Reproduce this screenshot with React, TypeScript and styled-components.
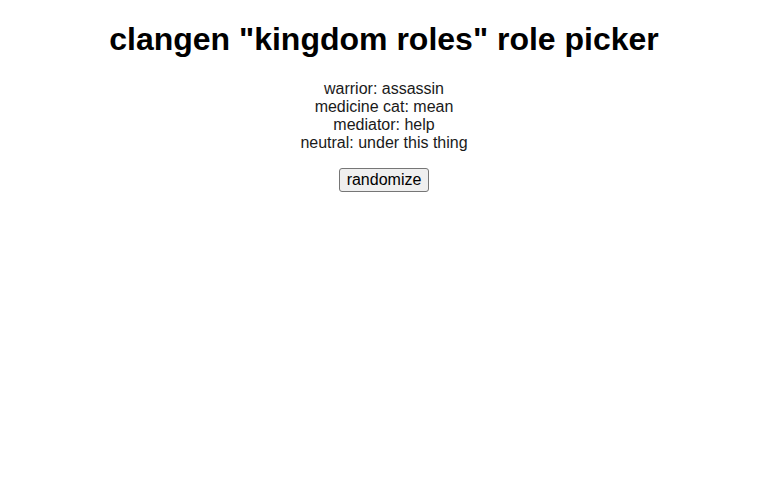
import { useState } from "react";
import styled, { createGlobalStyle } from "styled-components";

const ROLES = {
  warrior: ["assassin", "guard", "hunter", "scout"],
  "medicine cat": ["mean", "kind", "herbalist"],
  mediator: ["help", "peacekeeper", "diplomat"],
  neutral: ["under this thing", "wanderer", "loner"],
};

const pick = (list: string[]) => list[Math.floor(Math.random() * list.length)];

export default function App() {
  const [picked, setPicked] = useState<Record<string, string>>({
    warrior: "assassin",
    "medicine cat": "mean",
    mediator: "help",
    neutral: "under this thing",
  });

  const randomize = () => {
    const next: Record<string, string> = {};
    Object.entries(ROLES).forEach(([role, options]) => {
      next[role] = pick(options);
    });
    setPicked(next);
  };

  return (
    <>
      <GlobalStyle />
      <Page>
        <Title>clangen "kingdom roles" role picker</Title>
        <RoleList>
          {Object.keys(ROLES).map((role) => (
            <RoleLine key={role}>
              {role}: {picked[role]}
            </RoleLine>
          ))}
        </RoleList>
        <Actions>
          <RandomButton onClick={randomize}>randomize</RandomButton>
        </Actions>
      </Page>
    </>
  );
}

const GlobalStyle = createGlobalStyle`
  body {
    margin: 0;
    background: #ffffff;
    font-family: "Liberation Sans", Arial, sans-serif;
    color: #000000;
  }
`;

const Page = styled.div`
  text-align: center;
`;

const Title = styled.h1`
  font-size: 32px;
  font-weight: 700;
  margin: 21px 0 22px;
`;

const RoleList = styled.div`
  display: flex;
  flex-direction: column;
  align-items: center;
  font-size: 16px;
  line-height: 18px;
  color: #1a1a1a;
`;

const RoleLine = styled.div``;

const Actions = styled.div`
  margin-top: 16px;
`;

const RandomButton = styled.button`
  font-family: "Liberation Sans", Arial, sans-serif;
  font-size: 16px;
  line-height: 18px;
  color: #000000;
  background: #efefef;
  border: 1px solid #767676;
  border-radius: 3px;
  padding: 2px 7px;
  cursor: pointer;

  &:hover {
    background: #e5e5e5;
  }
`;
